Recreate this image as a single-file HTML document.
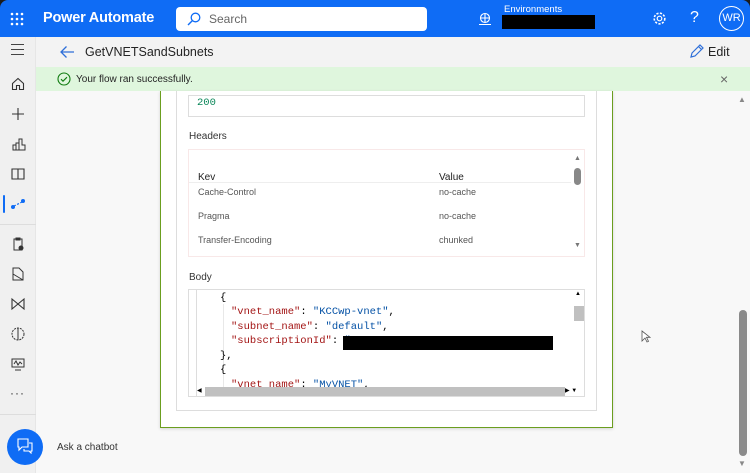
<!DOCTYPE html>
<html><head><meta charset="utf-8"><style>
*{box-sizing:border-box;margin:0;padding:0}
body{width:750px;height:473px;overflow:hidden;background:#1b1b1b;font-family:"Liberation Sans",sans-serif;position:relative}
.top{position:absolute;left:0;top:0;width:750px;height:37px;background:#0f6cf5;border-radius:8px 8px 0 0}
.abs{position:absolute}
.side{position:absolute;left:0;top:37px;width:36px;height:436px;background:#f0f0f0;border-right:1px solid #e6e6e6}
.main{position:absolute;left:36px;top:37px;width:714px;height:436px;background:#f8f8f8}
.hdr{position:absolute;left:36px;top:37px;width:714px;height:30px;background:#f3f3f3}
.ban{position:absolute;left:36px;top:67px;width:714px;height:24px;background:#dff6dd}
.mono{font-family:"Liberation Mono",monospace;font-size:10.5px;white-space:pre;position:absolute}
.k{color:#a31515}.s{color:#0451a5}
.ic{position:absolute;left:10px;width:16px;height:16px}
</style></head><body>
<div class="top"></div>
<svg class="abs" style="left:10px;top:12px" width="14" height="14"><g fill="#fff"><circle cx="2" cy="2" r="1.3"/><circle cx="7" cy="2" r="1.3"/><circle cx="12" cy="2" r="1.3"/><circle cx="2" cy="7" r="1.3"/><circle cx="7" cy="7" r="1.3"/><circle cx="12" cy="7" r="1.3"/><circle cx="2" cy="12" r="1.3"/><circle cx="7" cy="12" r="1.3"/><circle cx="12" cy="12" r="1.3"/></g></svg>
<div class="abs" style="left:43px;top:10px;color:#fff;font-size:14.5px;font-weight:bold;letter-spacing:-0.2px">Power Automate</div>
<div class="abs" style="left:176px;top:7px;width:251px;height:24px;background:#fff;border-radius:4px"></div>
<svg class="abs" style="left:187px;top:12px" width="14" height="14"><circle cx="8.5" cy="5.5" r="4.3" fill="none" stroke="#0f6cf5" stroke-width="1.3"/><path d="M5.5 8.5L1 13" stroke="#0f6cf5" stroke-width="1.4"/></svg>
<div class="abs" style="left:209px;top:12px;color:#666;font-size:12px">Search</div>
<svg class="abs" style="left:478px;top:12px" width="14" height="14"><circle cx="7" cy="6" r="4.5" fill="none" stroke="#fff" stroke-width="1.1"/><path d="M2.5 6h9M7 1.5v9M1 12.5h12" stroke="#fff" stroke-width="1.1"/></svg>
<div class="abs" style="left:504px;top:4px;color:#fff;font-size:9.5px">Environments</div>
<div class="abs" style="left:502px;top:15px;width:93px;height:14px;background:#000"></div>
<svg class="abs" style="left:652px;top:11px" width="15" height="15"><circle cx="7.5" cy="7.5" r="2.3" fill="none" stroke="#fff" stroke-width="1.2"/><circle cx="7.5" cy="7.5" r="5.3" fill="none" stroke="#fff" stroke-width="1.6" stroke-dasharray="2.2 1.4"/></svg>
<div class="abs" style="left:690px;top:9px;color:#fff;font-size:16px">?</div>
<div class="abs" style="left:719px;top:6px;width:25px;height:25px;border:1px solid #fff;border-radius:50%;color:#fff;font-size:11px;text-align:center;line-height:23px">WR</div>

<div class="side"></div>
<div class="main"></div>
<div class="hdr"></div>
<div class="ban"></div>
<div class="abs" style="left:11px;top:44px;width:13px;height:11px;border-top:1.3px solid #444;border-bottom:1.3px solid #444"><div style="margin-top:3.5px;border-top:1.3px solid #444"></div></div>
<svg class="abs" style="left:59px;top:45px" width="16" height="14"><path d="M15 7H2M7.5 1.5L2 7l5.5 5.5" fill="none" stroke="#2e6fd8" stroke-width="1.3"/></svg>
<div class="abs" style="left:85px;top:45px;font-size:12.5px;color:#242424">GetVNETSandSubnets</div>
<svg class="abs" style="left:689px;top:44px" width="15" height="15"><path d="M2 13l1-4 8-8 3 3-8 8z M9.5 2.5l3 3" fill="none" stroke="#2e6fd8" stroke-width="1.2"/></svg>
<div class="abs" style="left:708px;top:45px;font-size:12.5px;color:#242424">Edit</div>
<svg class="abs" style="left:57px;top:72px" width="14" height="14"><circle cx="7" cy="7" r="6" fill="none" stroke="#107c10" stroke-width="1.1"/><path d="M4 7.2l2 2 4-4" fill="none" stroke="#107c10" stroke-width="1.1"/></svg>
<div class="abs" style="left:76px;top:74px;font-size:10px;color:#242424">Your flow ran successfully.</div>
<div class="abs" style="left:720px;top:71px;font-size:14px;color:#666">×</div>

<svg class="ic" style="top:76px" viewBox="0 0 16 16"><path d="M2.5 7.5L8 2.5l5.5 5v6h-4v-4h-3v4h-4z" fill="none" stroke="#333" stroke-width="1.1"/></svg>
<svg class="ic" style="top:106px" viewBox="0 0 16 16"><path d="M8 2v12M2 8h12" stroke="#333" stroke-width="1.1"/></svg>
<svg class="ic" style="top:136px" viewBox="0 0 16 16"><path d="M3 9h3v5H3zM6 7h3v7H6zM9 3h3v6h3v5H9z" fill="none" stroke="#333" stroke-width="1"/></svg>
<svg class="ic" style="top:166px" viewBox="0 0 16 16"><path d="M2 3h12v10H2zM8 3v10" fill="none" stroke="#333" stroke-width="1.1"/></svg>
<div class="abs" style="left:3px;top:195px;width:2px;height:18px;background:#0f6cf5;border-radius:1px"></div>
<svg class="ic" style="top:196px" viewBox="0 0 16 16"><circle cx="3" cy="11" r="2" fill="#0f6cf5"/><circle cx="13" cy="5" r="2" fill="#0f6cf5"/><path d="M4 10l8-4" stroke="#0f6cf5" stroke-width="1.2" stroke-dasharray="2 1.5"/></svg>
<div class="abs" style="left:0;top:224px;width:36px;border-top:1px solid #ddd"></div>
<svg class="ic" style="top:236px" viewBox="0 0 16 16"><path d="M4 3h8v11H4z M6 2h4v2H6z" fill="none" stroke="#333"/><circle cx="11" cy="12" r="2.5" fill="#333"/></svg>
<svg class="ic" style="top:266px" viewBox="0 0 16 16"><path d="M3 2h6l4 4v8H3z M3 8l10 6" fill="none" stroke="#333"/></svg>
<svg class="ic" style="top:296px" viewBox="0 0 16 16"><path d="M2 3l12 10V3L2 13z" fill="none" stroke="#333" stroke-width="1.1"/></svg>
<svg class="ic" style="top:326px" viewBox="0 0 16 16"><circle cx="8" cy="8" r="6" fill="none" stroke="#333" stroke-dasharray="2 1"/><path d="M8 2v12" stroke="#333"/></svg>
<svg class="ic" style="top:356px" viewBox="0 0 16 16"><path d="M2 3h12v8H2zM5 14h6M4 8l2-3 2 4 2-3 2 2" fill="none" stroke="#333"/></svg>
<div class="abs" style="left:10px;top:386px;font-size:12px;color:#333;letter-spacing:1px">···</div>
<div class="abs" style="left:0;top:414px;width:36px;border-top:1px solid #ddd"></div>
<div class="abs" style="left:7px;top:429px;width:36px;height:36px;border-radius:50%;background:#0f6cf5"></div>
<svg class="abs" style="left:17px;top:438px" width="16" height="16"><path d="M1 1h10v8H5l-3 3V9H1z" fill="none" stroke="#fff" stroke-width="1.1"/><path d="M12 5h3v8h-1v2l-2-2H7v-2" fill="none" stroke="#fff" stroke-width="1.1"/></svg>
<div class="abs" style="left:57px;top:442px;font-size:10px;color:#333">Ask a chatbot</div>

<div class="abs" style="left:160px;top:91px;width:453px;height:337px;background:#fff;border:1.5px solid #6b9e1f;border-top:none;box-shadow:0 1px 3px rgba(0,0,0,.15)"></div>
<div class="abs" style="left:176px;top:91px;width:421px;height:320px;border:1px solid #ddd;border-top:none"></div>
<div class="abs" style="left:188px;top:95px;width:397px;height:22px;border:1px solid #ddd"></div>
<div class="mono" style="left:197px;top:97px;color:#098658">200</div>
<div class="abs" style="left:189px;top:131px;font-size:10px;color:#333">Headers</div>
<div class="abs" style="left:188px;top:149px;width:397px;height:108px;border:1px solid #f8e8e8"></div>
<div class="abs" style="left:198px;top:172px;font-size:10px;color:#222">Kev</div>
<div class="abs" style="left:439px;top:172px;font-size:10px;color:#222">Value</div>
<div class="abs" style="left:189px;top:182px;width:382px;border-top:1px solid #eee"></div>
<div class="abs" style="left:198px;top:187px;font-size:9px;color:#555">Cache-Control</div>
<div class="abs" style="left:439px;top:187px;font-size:9px;color:#555">no-cache</div>
<div class="abs" style="left:198px;top:211px;font-size:9px;color:#555">Pragma</div>
<div class="abs" style="left:439px;top:211px;font-size:9px;color:#555">no-cache</div>
<div class="abs" style="left:198px;top:235px;font-size:9px;color:#555">Transfer-Encoding</div>
<div class="abs" style="left:439px;top:235px;font-size:9px;color:#555">chunked</div>
<div class="abs" style="left:574px;top:155px;font-size:7px;color:#777">▲</div>
<div class="abs" style="left:574px;top:168px;width:7px;height:17px;background:#888;border-radius:4px"></div>
<div class="abs" style="left:574px;top:242px;font-size:7px;color:#777">▼</div>
<div class="abs" style="left:189px;top:272px;font-size:10px;color:#333">Body</div>
<div class="abs" style="left:188px;top:289px;width:397px;height:108px;border:1px solid #ddd;overflow:hidden">
<div class="abs" style="left:7px;top:0;width:1px;height:108px;background:#ddd"></div>
<div class="abs" style="left:34px;top:14px;width:1px;height:90px;background:#e8e8e8"></div>
<div class="mono" style="left:31px;top:2px"><span>{</span></div>
<div class="mono" style="left:42px;top:16px"><span class="k">"vnet_name"</span>: <span class="s">"KCCwp-vnet"</span>,</div>
<div class="mono" style="left:42px;top:31px"><span class="k">"subnet_name"</span>: <span class="s">"default"</span>,</div>
<div class="mono" style="left:42px;top:45px"><span class="k">"subscriptionId"</span>: <span class="s">"</span></div>
<div class="abs" style="left:154px;top:46px;width:210px;height:14px;background:#000"></div>
<div class="mono" style="left:31px;top:60px">},</div>
<div class="mono" style="left:31px;top:74px">{</div>
<div class="mono" style="left:42px;top:89px"><span class="k">"vnet_name"</span>: <span class="s">"MyVNET"</span>,</div>
<div class="mono" style="left:42px;top:103px"><span class="k">"subnet_name"</span>: <span class="s">"Subnet"</span></div>
<div class="abs" style="left:8px;top:97px;width:375px;height:9px;background:#c0c0c0"></div>
<div class="abs" style="left:8px;top:97px;width:8px;height:9px;background:#fff;font-size:6px;line-height:9px">◀</div>
<div class="abs" style="left:376px;top:97px;width:20px;height:10px;background:#fff;font-size:6px;line-height:9px">▶ ▼</div>
<div class="abs" style="left:385px;top:16px;width:10px;height:15px;background:#c0c0c0"></div>
<div class="abs" style="left:386px;top:1px;font-size:6px">▲</div>
</div>

<div class="abs" style="left:738px;top:95px;font-size:8px;color:#888">▲</div>
<div class="abs" style="left:739px;top:310px;width:8px;height:146px;background:#8a8a8a;border-radius:4px"></div>
<div class="abs" style="left:738px;top:459px;font-size:8px;color:#888">▼</div>
<svg class="abs" style="left:641px;top:330px" width="10" height="14"><path d="M1 1v10l3-3 2 4 1.5-.7-2-4H9z" fill="#fff" stroke="#555" stroke-width=".8"/></svg>
</body></html>
